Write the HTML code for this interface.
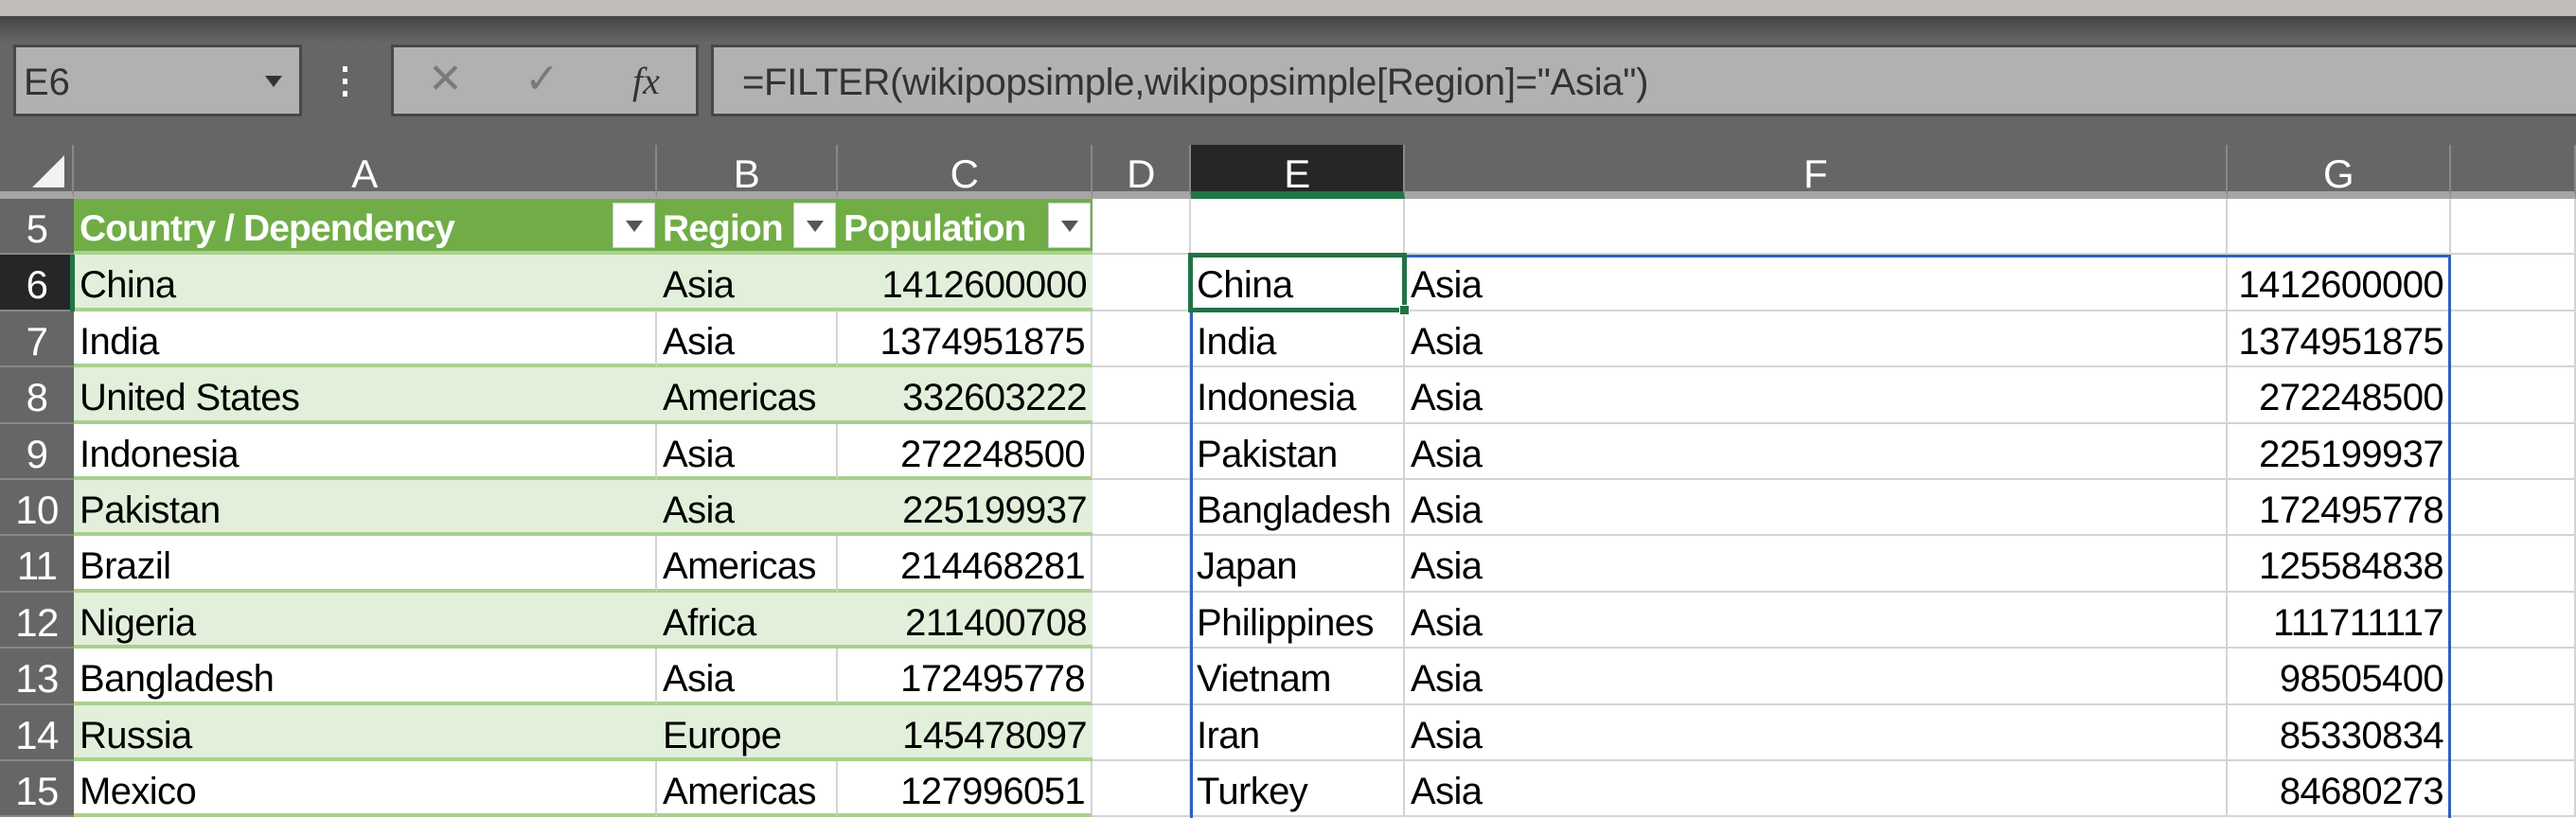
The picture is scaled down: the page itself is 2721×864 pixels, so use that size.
<!DOCTYPE html>
<html><head><meta charset="utf-8">
<style>
*{margin:0;padding:0;box-sizing:border-box}
html,body{width:2721px;height:864px;overflow:hidden;background:#fff;font-family:"Liberation Sans",sans-serif;position:relative}
.top{position:absolute;left:0;top:0;width:2721px;height:17px;background:#c0bcb8}
.bar{position:absolute;left:0;top:17px;width:2721px;height:136px;background:linear-gradient(#454545 0px,#666 28px,#666)}
.box{position:absolute;background:#b1b1b1;border:3px solid #484848}
.nb{left:14px;top:47px;width:305px;height:76px;font-size:40px;color:#333;padding:15px 0 0 8px}
.fb{left:413px;top:47px;width:325px;height:76px}
.fx{left:751px;top:47px;width:1980px;height:76px;font-size:40px;color:#333;padding:15px 0 0 30px;letter-spacing:-0.3px}
.grid{position:absolute;left:0;top:153px;display:grid;grid-template-columns:78px 616px 191px 269px 104px 226px 869px 236px 132px;grid-template-rows:57px repeat(11,59.4px)}
.grid>div{border-right:2px solid #d4d4d4;border-bottom:2px solid #d4d4d4;font-size:40px;letter-spacing:-0.6px;line-height:56px;padding:4px 6px 0;white-space:nowrap;overflow:hidden;color:#000}
.grid>.ch{background:#666;color:#fff;text-align:center;border-right:2px solid #888;border-bottom:8px solid #a6a6a6;line-height:50px;font-size:42px;padding-top:6px}
.grid>.rh{background:#666;color:#fff;text-align:center;border-right:none;border-bottom:2px solid #888;font-size:42px;padding:4px 0 0}
.grid>.sel{background:#262626}
.grid>.chs{background:#262626;border-bottom:8px solid #217346}
.grid>.g{background:#e2efda;border-right:none;border-bottom:4px solid #a9d08e}
.grid>.w{background:#fff;border-bottom:4px solid #a9d08e}
.grid>.h{background:#70ad47;color:#fff;font-weight:bold;border-right:none;border-bottom:4px solid #a9d08e;position:relative;font-size:39px;letter-spacing:-0.9px}
.r{text-align:right}
.dd{position:absolute;right:2px;top:4px;width:45px;height:48px;background:#fff;border:1px solid #ccc}
.dd:after{content:"";position:absolute;left:13px;top:18px;border-left:9px solid transparent;border-right:9px solid transparent;border-top:12px solid #555}
</style></head><body>
<div class="top"></div>
<div class="bar"></div>
<div class="box nb">E6<span style="position:absolute;right:18px;top:30px;border-left:9px solid transparent;border-right:9px solid transparent;border-top:12px solid #333"></span></div>
<div style="position:absolute;left:362px;top:70px;width:5px;height:32px;background:repeating-linear-gradient(#fff 0 6px,transparent 6px 13px)"></div>
<div class="box fb">
<span style="position:absolute;left:36px;top:8px;font-size:44px;color:#7a7a7a">✕</span>
<span style="position:absolute;left:138px;top:8px;font-size:44px;color:#7a7a7a">✓</span>
<span style="position:absolute;left:252px;top:12px;font-size:40px;color:#333;font-family:'Liberation Serif',serif;font-style:italic">fx</span>
</div>
<div class="box fx">=FILTER(wikipopsimple,wikipopsimple[Region]="Asia")</div>

<div class="grid">
<div class="ch" style="position:relative"><span style="position:absolute;right:8px;bottom:4px;border-left:34px solid transparent;border-bottom:34px solid #f2f2f2"></span></div>
<div class="ch">A</div><div class="ch">B</div><div class="ch">C</div><div class="ch">D</div><div class="ch chs">E</div><div class="ch">F</div><div class="ch">G</div><div class="ch"></div>

<div class="rh">5</div><div class="h">Country / Dependency<span class="dd"></span></div><div class="h">Region<span class="dd"></span></div><div class="h">Population<span class="dd"></span></div><div></div><div></div><div></div><div></div><div></div>
<div class="rh sel">6</div><div class="g">China</div><div class="g">Asia</div><div class="g r">1412600000</div><div></div><div>China</div><div>Asia</div><div class="r">1412600000</div><div></div>
<div class="rh">7</div><div class="w">India</div><div class="w">Asia</div><div class="w r">1374951875</div><div></div><div>India</div><div>Asia</div><div class="r">1374951875</div><div></div>
<div class="rh">8</div><div class="g">United States</div><div class="g">Americas</div><div class="g r">332603222</div><div></div><div>Indonesia</div><div>Asia</div><div class="r">272248500</div><div></div>
<div class="rh">9</div><div class="w">Indonesia</div><div class="w">Asia</div><div class="w r">272248500</div><div></div><div>Pakistan</div><div>Asia</div><div class="r">225199937</div><div></div>
<div class="rh">10</div><div class="g">Pakistan</div><div class="g">Asia</div><div class="g r">225199937</div><div></div><div>Bangladesh</div><div>Asia</div><div class="r">172495778</div><div></div>
<div class="rh">11</div><div class="w">Brazil</div><div class="w">Americas</div><div class="w r">214468281</div><div></div><div>Japan</div><div>Asia</div><div class="r">125584838</div><div></div>
<div class="rh">12</div><div class="g">Nigeria</div><div class="g">Africa</div><div class="g r">211400708</div><div></div><div>Philippines</div><div>Asia</div><div class="r">111711117</div><div></div>
<div class="rh">13</div><div class="w">Bangladesh</div><div class="w">Asia</div><div class="w r">172495778</div><div></div><div>Vietnam</div><div>Asia</div><div class="r">98505400</div><div></div>
<div class="rh">14</div><div class="g">Russia</div><div class="g">Europe</div><div class="g r">145478097</div><div></div><div>Iran</div><div>Asia</div><div class="r">85330834</div><div></div>
<div class="rh">15</div><div class="w">Mexico</div><div class="w">Americas</div><div class="w r">127996051</div><div></div><div>Turkey</div><div>Asia</div><div class="r">84680273</div><div></div>
</div>
<div style="position:absolute;left:1257px;top:269px;width:1332px;height:595px;border:3px solid #2f62c0;border-bottom:none"></div>
<div style="position:absolute;left:1255px;top:267px;width:231px;height:63px;border:5px solid #217346"></div>
<div style="position:absolute;left:1478px;top:322px;width:11px;height:11px;background:#217346;border:1px solid #fff"></div>
<div style="position:absolute;left:74px;top:269px;width:5px;height:60px;background:#217346"></div>
</body></html>
